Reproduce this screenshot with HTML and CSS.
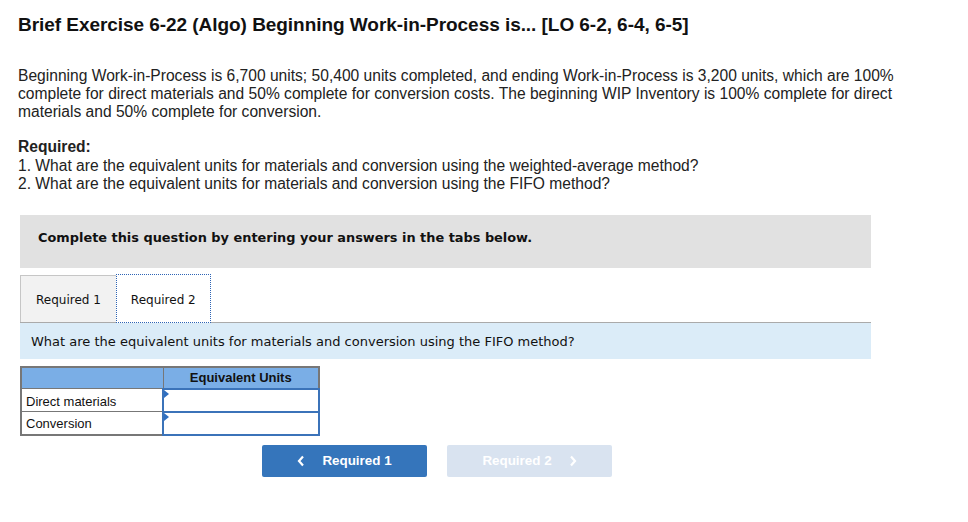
FILE: index.html
```html
<!DOCTYPE html>
<html>
<head>
<meta charset="utf-8">
<link rel="stylesheet" href="styles.css">
</head>
<body>
<div class="page">
  <h1 class="title">Brief Exercise 6-22 (Algo) Beginning Work-in-Process is... [LO 6-2, 6-4, 6-5]</h1>
  <p class="intro">Beginning Work-in-Process is 6,700 units; 50,400 units completed, and ending Work-in-Process is 3,200 units, which are 100% complete for direct materials and 50% complete for conversion costs. The beginning WIP Inventory is 100% complete for direct materials and 50% complete for conversion.</p>
  <div class="required">
    <div class="req-head">Required:</div>
    <div>1. What are the equivalent units for materials and conversion using the weighted-average method?</div>
    <div>2. What are the equivalent units for materials and conversion using the FIFO method?</div>
  </div>
  <div class="notice">Complete this question by entering your answers in the tabs below.</div>
  <div class="tabs">
    <div class="tab">Required 1</div>
    <div class="tab active">Required 2</div>
  </div>
  <div class="question">What are the equivalent units for materials and conversion using the FIFO method?</div>
  <table class="grid">
    <tr class="head"><th class="c1"></th><th class="c2">Equivalent Units</th></tr>
    <tr><td class="c1">Direct materials</td><td class="c2 input"><span class="flag"></span></td></tr>
    <tr><td class="c1">Conversion</td><td class="c2 input"><span class="flag"></span></td></tr>
  </table>
  <div class="nav">
    <button class="btn prev"><svg class="chev" width="8" height="12" viewBox="0 0 8 12"><path d="M6 1.5 L2 6 L6 10.5" fill="none" stroke="#fff" stroke-width="2.2"/></svg>Required 1</button>
    <button class="btn next">Required 2<svg class="chev" width="8" height="12" viewBox="0 0 8 12"><path d="M2 1.5 L6 6 L2 10.5" fill="none" stroke="#fff" stroke-width="2.2"/></svg></button>
  </div>
</div>
</body>
</html>
```
FILE: styles.css
```css
html, body { margin: 0; padding: 0; background: #fff; }
.page { padding: 12px 0 0 18px; width: 900px; font-family: "Liberation Sans", sans-serif; color: #222; }
.title { margin: 0; font-size: 19px; font-weight: 700; letter-spacing: -0.05px; line-height: 26px; color: #111; }
.intro { margin: 29px 0 0; font-size: 15.6px; line-height: 18px; color: #222; }
.required { margin-top: 17px; font-size: 15.6px; line-height: 18.5px; }
.req-head { font-weight: 700; }
.notice { margin: 21px 0 0 2px; width: 851px; box-sizing: border-box; height: 53px; background: #e1e1e1; padding: 15px 18px; font-family: "DejaVu Sans", sans-serif; font-weight: 700; font-size: 12.9px; color: #111; }
.tabs { display: flex; margin: 7px 0 0 2px; height: 48px; width: 851px; border-bottom: 1px solid #aaa; box-sizing: border-box; align-items: flex-end; }
.tab { font-family: "DejaVu Sans", sans-serif; font-size: 12px; color: #111; height: 47px; box-sizing: border-box; padding: 2px 15px 0; display: flex; align-items: center; background: #f2f2f2; border: 1px solid #c6c6c6; border-bottom: none; }
.tab.active { background: #fff; border: 1px dotted #2e64b5; height: 49px; margin-left: -1px; margin-bottom: -1px; padding: 3px 14px 0; }
.question { margin-left: 2px; width: 851px; box-sizing: border-box; height: 36px; background: #dbecf8; padding: 1px 11px 0; display: flex; align-items: center; font-family: "DejaVu Sans", sans-serif; font-size: 13px; color: #111; }
.grid { margin: 7px 0 0 2px; border-collapse: collapse; border: 2px solid #777; font-size: 13px; color: #111; }
.grid th, .grid td { border: 1px solid #777; padding: 0 4px; height: 22px; box-sizing: border-box; }
.grid .head th { background: #7aaee6; font-weight: 700; font-size: 13px; height: 22px; }
.grid .c1 { width: 142px; text-align: left; padding-top: 2px; }
.grid .c2 { width: 156px; }
.grid td.input { border: 2px solid #3b73b9; position: relative; padding: 0; height: 23px; }
.flag { position: absolute; left: 0; top: 0; width: 0; height: 0; border-top: 4px solid transparent; border-bottom: 4px solid transparent; border-left: 5px solid #2f6fc0; }
.nav { display: flex; gap: 20px; margin: 9px 0 0 244px; }
.btn { width: 165px; height: 32px; border: none; border-radius: 2px; color: #fff; font-family: "Liberation Sans", sans-serif; font-weight: 700; font-size: 13.4px; display: flex; align-items: center; justify-content: center; padding: 0; }
.btn.prev { background: #3575bb; }
.btn.next { background: #d9e3f0; }
.prev .chev { margin-right: 17px; margin-left: 0; }
.next .chev { margin-left: 17px; margin-right: 0; }
```
